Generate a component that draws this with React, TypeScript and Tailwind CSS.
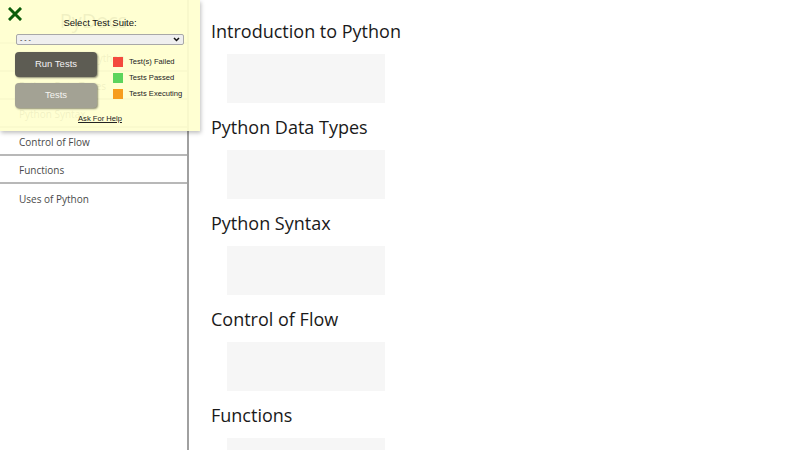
import React from "react";

const sections = [
  "Introduction to Python",
  "Python Data Types",
  "Python Syntax",
  "Control of Flow",
  "Functions",
  "Uses of Python",
];

export default function App() {
  return (
    <div className="relative flex h-[450px] w-[800px] overflow-hidden bg-white" style={{ fontFamily: '"Open Sans", sans-serif' }}>
      {/* Sidebar */}
      <nav className="w-[189px] shrink-0 border-r-2 border-[#a0a0a0]">
        <div className="flex h-[44px] items-center justify-center border-b-2 border-[#c4c4c4] text-[20px] text-[#444]">
          PyDocs
        </div>
        {sections.map((s, i) => (
          <div
            key={s}
            className={`flex h-[28px] items-center pl-[19px] pt-[3px] text-[10px] text-[#4a4a4a] ${i < sections.length - 1 ? "border-b-2 border-[#b8b8b8]" : ""}`}
          >
            {s}
          </div>
        ))}
      </nav>

      {/* Main */}
      <main className="flex-1 pl-[22px] pt-[18px]">
        {sections.map((s, i) => (
          <section key={s} className={i > 0 ? "mt-[11px]" : ""}>
            <h2 className="text-[18px] leading-[27px] text-[#1a1a1a]">{s}</h2>
            <div className="ml-[16px] mt-[9px] h-[49px] w-[158px] bg-[#f6f6f6]" />
          </section>
        ))}
      </main>

      {/* Test suite overlay */}
      <div
        className="absolute left-0 top-0 h-[131px] w-[200px] bg-[rgba(255,255,206,0.92)] shadow-[1px_2px_4px_rgba(0,0,0,0.25)]"
        style={{ fontFamily: '"Liberation Sans", Arial, sans-serif' }}
      >
        <div className="absolute left-[8px] top-[7px]">
          <svg width="14" height="14" viewBox="0 0 14 14">
            <path d="M2 2 L12 12 M12 2 L2 12" stroke="#0b5e0b" strokeWidth="3" strokeLinecap="square" />
          </svg>
        </div>
        <div className="flex flex-col items-center pt-[17px]">
          <div className="text-[9.5px] leading-[12px] text-[#111]">Select Test Suite:</div>
          <div className="mt-[5px] flex h-[11px] w-[168px] items-center justify-between rounded-[2px] border border-[#a8a8a8] bg-[#efefef] px-[3px]">
            <span className="text-[7px] leading-none text-[#222]">- - -</span>
            <svg width="7" height="5" viewBox="0 0 7 5">
              <path d="M1 1 L3.5 3.5 L6 1" stroke="#111" strokeWidth="1.5" fill="none" />
            </svg>
          </div>
        </div>
        <div className="mt-[7px] flex pl-[15px]">
          <div className="flex flex-col gap-[6px]">
            <button className="h-[25px] w-[82px] rounded-[4px] bg-[#5d5c53] text-[9.5px] text-[#f2f2f2] shadow-[1px_1px_2px_rgba(0,0,0,0.45)]">
              Run Tests
            </button>
            <button className="h-[25px] w-[82px] rounded-[4px] bg-[#a3a294] text-[9.5px] text-[#f4f4f0] shadow-[1px_1px_2px_rgba(0,0,0,0.45)]">
              Tests
            </button>
          </div>
          <div className="ml-[16px] mt-[5px] flex flex-col gap-[6px]">
            {[
              ["#f44a3e", "Test(s) Failed"],
              ["#5cd45c", "Tests Passed"],
              ["#f69d1e", "Tests Executing"],
            ].map(([c, t]) => (
              <div key={t} className="flex h-[10px] items-center">
                <span className="h-[10px] w-[10px]" style={{ backgroundColor: c }} />
                <span className="ml-[6px] text-[7.6px] leading-none text-[#222]">{t}</span>
              </div>
            ))}
          </div>
        </div>
        <div className="mt-[5px] text-center text-[7.6px] leading-[11px] text-[#222] underline">Ask For Help</div>
      </div>
    </div>
  );
}
